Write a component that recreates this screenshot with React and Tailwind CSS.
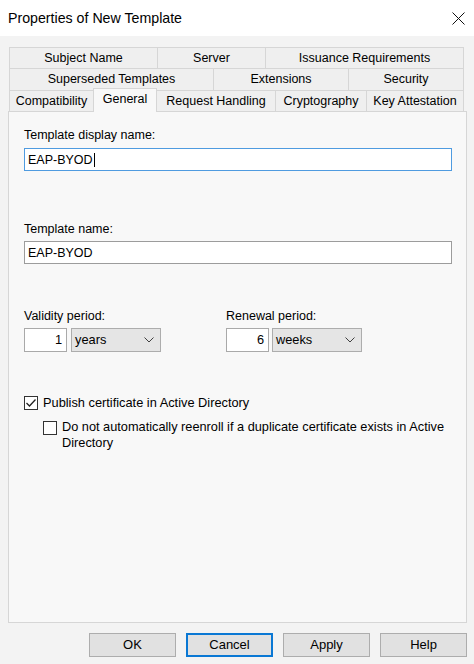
import React from "react";

const font = { fontFamily: '"Liberation Sans", Arial, sans-serif' };

function Tab({ label, w, cls = "" }) {
  return (
    <div
      className={`h-full flex items-center justify-center border-t border-l border-[#d6d6d6] bg-[#efefef] text-[12.5px] leading-none text-black ${cls}`}
      style={{ width: w }}
    >
      {label}
    </div>
  );
}

function Chevron() {
  return (
    <svg width="10" height="6" viewBox="0 0 10 6" className="shrink-0">
      <polyline points="0.5,0.5 5,5 9.5,0.5" fill="none" stroke="#404040" strokeWidth="1" />
    </svg>
  );
}

function Select({ value }) {
  return (
    <div className="w-[90px] h-[24px] border border-[#adadad] bg-[#e5e5e5] flex items-center justify-between pl-[3px] pr-[6px] text-[12.8px]">
      <span>{value}</span>
      <Chevron />
    </div>
  );
}

function NumInput({ value }) {
  return (
    <div className="w-[43px] h-[24px] border border-[#a9a9a9] bg-white flex items-center justify-end pr-[4px] text-[12.8px]">
      {value}
    </div>
  );
}

function Checkbox({ checked }) {
  return (
    <div className="w-[14px] h-[14px] border border-[#333333] bg-white flex items-center justify-center shrink-0">
      {checked && (
        <svg width="12" height="12" viewBox="0 0 12 12">
          <polyline points="1.5,6 4.5,9 10.5,2.5" fill="none" stroke="#222" strokeWidth="1.3" />
        </svg>
      )}
    </div>
  );
}

function Button({ label, primary }) {
  return (
    <div
      className={`w-[87px] h-[24px] flex items-center justify-center bg-[#e1e1e1] text-[13px] text-black ${
        primary ? "border-2 border-[#0a78d4]" : "border border-[#adadad]"
      }`}
    >
      {label}
    </div>
  );
}

export default function App() {
  return (
    <div className="w-[474px] h-[664px] bg-white flex flex-col text-black" style={font}>
      {/* Title bar */}
      <div className="h-[36px] shrink-0 flex items-center justify-between pl-[8px] pr-[9px] bg-white">
        <span className="text-[14.2px] leading-[20px]">Properties of New Template</span>
        <svg width="13" height="13" viewBox="0 0 13 13">
          <line x1="0.5" y1="0.5" x2="12.5" y2="12.5" stroke="#111" strokeWidth="1" />
          <line x1="12.5" y1="0.5" x2="0.5" y2="12.5" stroke="#111" strokeWidth="1" />
        </svg>
      </div>

      {/* Body */}
      <div className="flex-1 flex flex-col bg-[#f3f3f3] pt-[11px] pl-[8px] pr-[7px] pb-[7px]">
        {/* Tabs */}
        <div className="flex flex-col pl-[1px]">
          <div className="flex h-[21px]">
            <Tab label="Subject Name" w={148} />
            <Tab label="Server" w={108} />
            <Tab label="Issuance Requirements" w={199} cls="border-r" />
          </div>
          <div className="flex h-[22px]">
            <Tab label="Superseded Templates" w={204} />
            <Tab label="Extensions" w={135} />
            <Tab label="Security" w={116} cls="border-r" />
          </div>
          <div className="flex h-[21px] items-end">
            <Tab label="Compatibility" w={84} />
            <div className="relative z-10 h-[24px] mb-[-1px] w-[64px] flex items-center justify-center border-t border-l border-r border-[#d6d6d6] bg-[#f8f8f8] text-[12.5px] leading-none pb-[2px]">
              General
            </div>
            <div className="h-full flex items-center justify-center border-t border-[#d6d6d6] bg-[#efefef] text-[12.5px] leading-none w-[118px]">
              Request Handling
            </div>
            <Tab label="Cryptography" w={91} />
            <Tab label="Key Attestation" w={98} cls="border-r" />
          </div>
        </div>

        {/* Panel */}
        <div className="flex-1 border border-[#d6d6d6] bg-[#f8f8f8] pt-[15px] pl-[15px] pr-[14px] flex flex-col text-[12.5px] leading-[16px]">
          <div>Template display name:</div>
          <div className="mt-[5px] h-[23px] border border-[#4f9be0] bg-white flex items-center pl-[3px]">
            <span>EAP-BYOD</span>
            <span className="w-px h-[14px] bg-black ml-[1px]" />
          </div>

          <div className="mt-[50px]">Template name:</div>
          <div className="mt-[4px] h-[23px] border border-[#9c9c9c] bg-white flex items-center pl-[3px]">
            EAP-BYOD
          </div>

          <div className="mt-[44px] flex">
            <div className="w-[202px] flex flex-col">
              <div>Validity period:</div>
              <div className="mt-[4px] flex gap-[4px]">
                <NumInput value="1" />
                <Select value="years" />
              </div>
            </div>
            <div className="flex flex-col">
              <div>Renewal period:</div>
              <div className="mt-[4px] flex gap-[3px]">
                <NumInput value="6" />
                <Select value="weeks" />
              </div>
            </div>
          </div>

          <div className="mt-[43px] flex items-center gap-[5px] text-[12.8px]">
            <Checkbox checked />
            <span>Publish certificate in Active Directory</span>
          </div>

          <div className="mt-[8px] pl-[19px] flex items-start gap-[5px] text-[12.75px]">
            <div className="mt-[2px]">
              <Checkbox />
            </div>
            <span>
              Do not automatically reenroll if a duplicate certificate exists in Active
              <br />
              Directory
            </span>
          </div>
        </div>

        {/* Buttons */}
        <div className="mt-[10px] flex justify-end gap-[10px]">
          <Button label="OK" />
          <Button label="Cancel" primary />
          <Button label="Apply" />
          <Button label="Help" />
        </div>
      </div>
    </div>
  );
}
